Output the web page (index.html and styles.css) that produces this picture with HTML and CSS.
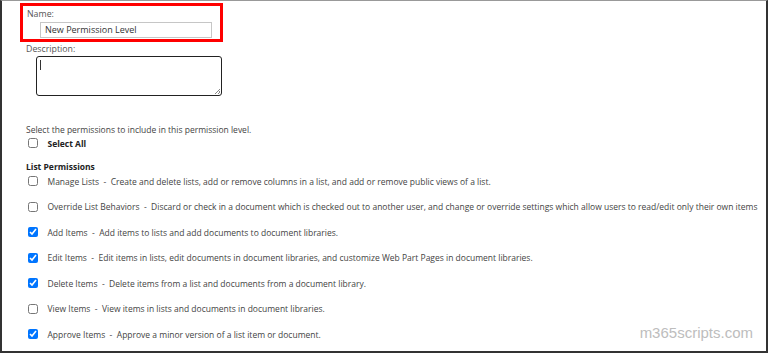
FILE: index.html
```html
<!DOCTYPE html>
<html>
<head>
<meta charset="utf-8">
<link rel="stylesheet" href="styles.css">
</head>
<body>
<div class="frame">
  <div class="name-box">
    <div class="label">Name:</div>
    <div class="input">New Permission Level</div>
  </div>
  <div class="label desc-label">Description:</div>
  <div class="textarea"><span class="caret"></span><span class="grip"></span></div>

  <div class="intro">Select the permissions to include in this permission level.</div>
  <div class="select-all"><input type="checkbox" class="cb"><span>Select All</span></div>
  <div class="group">List Permissions</div>
  <div class="row first"><input type="checkbox" class="cb"><span>Manage Lists&nbsp; - &nbsp;Create and delete lists, add or remove columns in a list, and add or remove public views of a list.</span></div>
  <div class="row"><input type="checkbox" class="cb"><span>Override List Behaviors&nbsp; - &nbsp;Discard or check in a document which is checked out to another user, and change or override settings which allow users to read/edit only their own items</span></div>
  <div class="row"><input type="checkbox" class="cb" checked><span>Add Items&nbsp; - &nbsp;Add items to lists and add documents to document libraries.</span></div>
  <div class="row"><input type="checkbox" class="cb" checked><span>Edit Items&nbsp; - &nbsp;Edit items in lists, edit documents in document libraries, and customize Web Part Pages in document libraries.</span></div>
  <div class="row"><input type="checkbox" class="cb" checked><span>Delete Items&nbsp; - &nbsp;Delete items from a list and documents from a document library.</span></div>
  <div class="row"><input type="checkbox" class="cb"><span>View Items&nbsp; - &nbsp;View items in lists and documents in document libraries.</span></div>
  <div class="row"><input type="checkbox" class="cb" checked><span>Approve Items&nbsp; - &nbsp;Approve a minor version of a list item or document.</span></div>
  <div class="watermark">m365scripts.com</div>
</div>
</body>
</html>
```

FILE: styles.css
```css
html, body {
  margin: 0;
  padding: 0;
  background: #fff;
}
body {
  font-family: "Open Sans", "Noto Sans", sans-serif;
  font-size: 8.5px;
  color: #444;
}
.frame {
  position: relative;
  box-sizing: border-box;
  width: 768px;
  height: 353px;
  border-top: 1px solid #999;
  border-left: 2px solid #333;
  border-right: 2px solid #333;
  border-bottom: 2px solid #333;
  padding: 2px 0 0 24px;
  overflow: hidden;
}
.name-box {
  box-sizing: border-box;
  width: 203px;
  height: 39px;
  margin-left: -6px;
  border: 3px solid #f00;
  padding: 2px 0 0 4px;
}
.label {
  line-height: 12px;
  font-size: 8.8px;
  color: #555;
}
.input {
  box-sizing: border-box;
  width: 172px;
  height: 16px;
  margin: 2px 0 0 13px;
  border: 1px solid #c6c6c6;
  padding-left: 4px;
  line-height: 14px;
  font-size: 9px;
  color: #333;
}
.desc-label {
  margin-top: 1px;
}
.textarea {
  position: relative;
  box-sizing: border-box;
  width: 186px;
  height: 39.5px;
  margin: 1px 0 0 10px;
  border: 1.5px solid #222;
  border-radius: 3px;
}
.caret {
  position: absolute;
  left: 3px;
  top: 3px;
  width: 1px;
  height: 10px;
  background: #333;
}
.grip {
  position: absolute;
  right: 1px;
  bottom: 1px;
  width: 5px;
  height: 5px;
  background: linear-gradient(135deg, transparent 45%, #888 45%, #888 55%, transparent 55%, transparent 70%, #888 70%, #888 80%, transparent 80%);
}
.intro {
  margin-top: 28.5px;
  line-height: 12px;
}
.select-all {
  display: flex;
  align-items: center;
  height: 14px;
  font-weight: bold;
  color: #222;
}
.cb {
  width: 10px;
  height: 10px;
  margin: 0 10px 0 1.5px;
  flex: none;
}
.group {
  margin-top: 11px;
  line-height: 12px;
  font-weight: bold;
  color: #222;
}
.row {
  display: flex;
  align-items: center;
  height: 25.5px;
  white-space: nowrap;
}
.row.first {
  margin-top: -4.75px;
}
.watermark {
  position: absolute;
  right: 13px;
  bottom: 10px;
  font-family: "Liberation Sans", Arial, sans-serif;
  font-size: 15px;
  color: #bdbdbd;
}
```
